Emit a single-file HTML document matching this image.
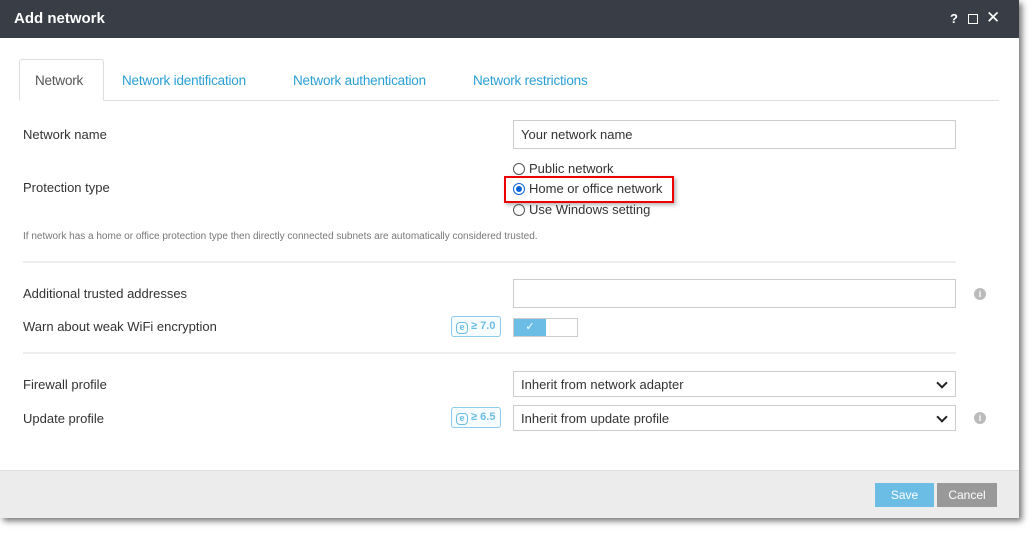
<!DOCTYPE html>
<html><head><meta charset="utf-8"><style>
*{box-sizing:border-box;margin:0;padding:0}
body{width:1034px;height:534px;background:#fff;font-family:"Liberation Sans",sans-serif;position:relative;overflow:hidden;font-size:13px;color:#333}
.a{position:absolute}
.dlg{left:0;top:0;width:1019px;height:518px;background:#fff;box-shadow:3px 3px 6px rgba(0,0,0,.55)}
.hd{left:0;top:0;width:1019px;height:38px;background:#393d45;color:#fff;font-weight:bold;font-size:15px;padding:10px 14px}
.tab{top:60px;height:41px;padding-top:13px;font-size:13.5px;color:#2a9fd6;letter-spacing:-0.2px}
.lbl{left:23px;font-size:13px;color:#333}
.inp{left:513px;width:443px;height:29px;border:1px solid #ccc;background:#fff;padding:6px 7px;font-size:13px;color:#333}
.rad{left:513px;font-size:13px;color:#333}
.rad i{display:inline-block;width:12px;height:12px;border:1px solid #555;border-radius:50%;vertical-align:-2px;margin-right:4px;position:relative}
.sep{left:23px;width:933px;height:2px;background:#eee}
.badge{width:50px;height:21px;border:1px solid #8cccec;border-radius:3px;color:#6cbde6;font-weight:bold;font-size:11px;padding:3px 4px;background:#f7fcff}
.badge b{display:inline-block;width:12px;height:12px;border:1.5px solid #6cbde6;border-radius:4px;font-size:9px;line-height:9px;text-align:center;vertical-align:-1px}
.info{width:12px;height:12px;border-radius:50%;background:#bbb;color:#fff;font-size:9px;font-weight:bold;text-align:center;line-height:12px}
.sel:after{content:"";position:absolute;right:9px;top:7px;width:6px;height:6px;border-right:2px solid #222;border-bottom:2px solid #222;transform:rotate(45deg)}
</style></head><body>
<div class="a dlg"></div>
<div class="a hd">Add network</div>
<div class="a" style="left:950px;top:11px;color:#fff;font-weight:bold;font-size:13px">?</div>
<div class="a" style="left:968px;top:14px;width:10px;height:10px;border:1.5px solid #fff"></div>
<div class="a" style="left:986px;top:8px;color:#fff;font-size:17px">✕</div>

<div class="a" style="left:19px;top:100px;width:980px;height:1px;background:#ddd"></div>
<div class="a" style="left:19px;top:59px;width:85px;height:42px;border:1px solid #ddd;border-bottom:1px solid #fff;border-radius:3px 3px 0 0;background:#fff"></div>
<div class="a tab" style="left:35px;color:#555">Network</div>
<div class="a tab" style="left:122px">Network identification</div>
<div class="a tab" style="left:293px">Network authentication</div>
<div class="a tab" style="left:473px">Network restrictions</div>

<div class="a lbl" style="top:127px">Network name</div>
<div class="a inp" style="top:120px">Your network name</div>
<div class="a lbl" style="top:180px">Protection type</div>
<div class="a rad" style="top:161px"><i></i>Public network</div>
<div class="a" style="left:504px;top:176px;width:170px;height:27px;border:2px solid #e00;box-shadow:2px 2px 4px rgba(0,0,0,.3)"></div>
<div class="a rad" style="top:181px"><i style="border-color:#0a64d8"><span style="position:absolute;left:2px;top:2px;width:6px;height:6px;border-radius:50%;background:#0a64d8"></span></i>Home or office network</div>
<div class="a rad" style="top:202px"><i></i>Use Windows setting</div>
<div class="a" style="left:23px;top:231px;font-size:10px;color:#777">If network has a home or office protection type then directly connected subnets are automatically considered trusted.</div>
<div class="a sep" style="top:261px"></div>

<div class="a lbl" style="top:286px">Additional trusted addresses</div>
<div class="a inp" style="top:279px"></div>
<div class="a info" style="left:974px;top:288px">i</div>
<div class="a lbl" style="top:319px">Warn about weak WiFi encryption</div>
<div class="a badge" style="left:451px;top:316px"><b>e</b> ≥ 7.0</div>
<div class="a" style="left:513px;top:318px;width:65px;height:19px;border:1px solid #ccc"><div style="width:32px;height:17px;background:#6cbde6;color:#fff;text-align:center;font-size:11px;line-height:17px">✓</div></div>
<div class="a sep" style="top:352px"></div>

<div class="a lbl" style="top:377px">Firewall profile</div>
<div class="a inp sel" style="top:371px;height:26px;padding-top:5px">Inherit from network adapter</div>
<div class="a lbl" style="top:411px">Update profile</div>
<div class="a badge" style="left:451px;top:407px"><b>e</b> ≥ 6.5</div>
<div class="a inp sel" style="top:405px;height:26px;padding-top:5px">Inherit from update profile</div>
<div class="a info" style="left:974px;top:412px">i</div>

<div class="a" style="left:0;top:470px;width:1019px;height:48px;background:#ececec;border-top:1px solid #e0e0e0"></div>
<div class="a" style="left:875px;top:483px;width:59px;height:24px;background:#6cbde6;color:#fff;font-size:12px;text-align:center;line-height:24px">Save</div>
<div class="a" style="left:937px;top:483px;width:60px;height:24px;background:#999;color:#fff;font-size:12px;text-align:center;line-height:24px">Cancel</div>
</body></html>
